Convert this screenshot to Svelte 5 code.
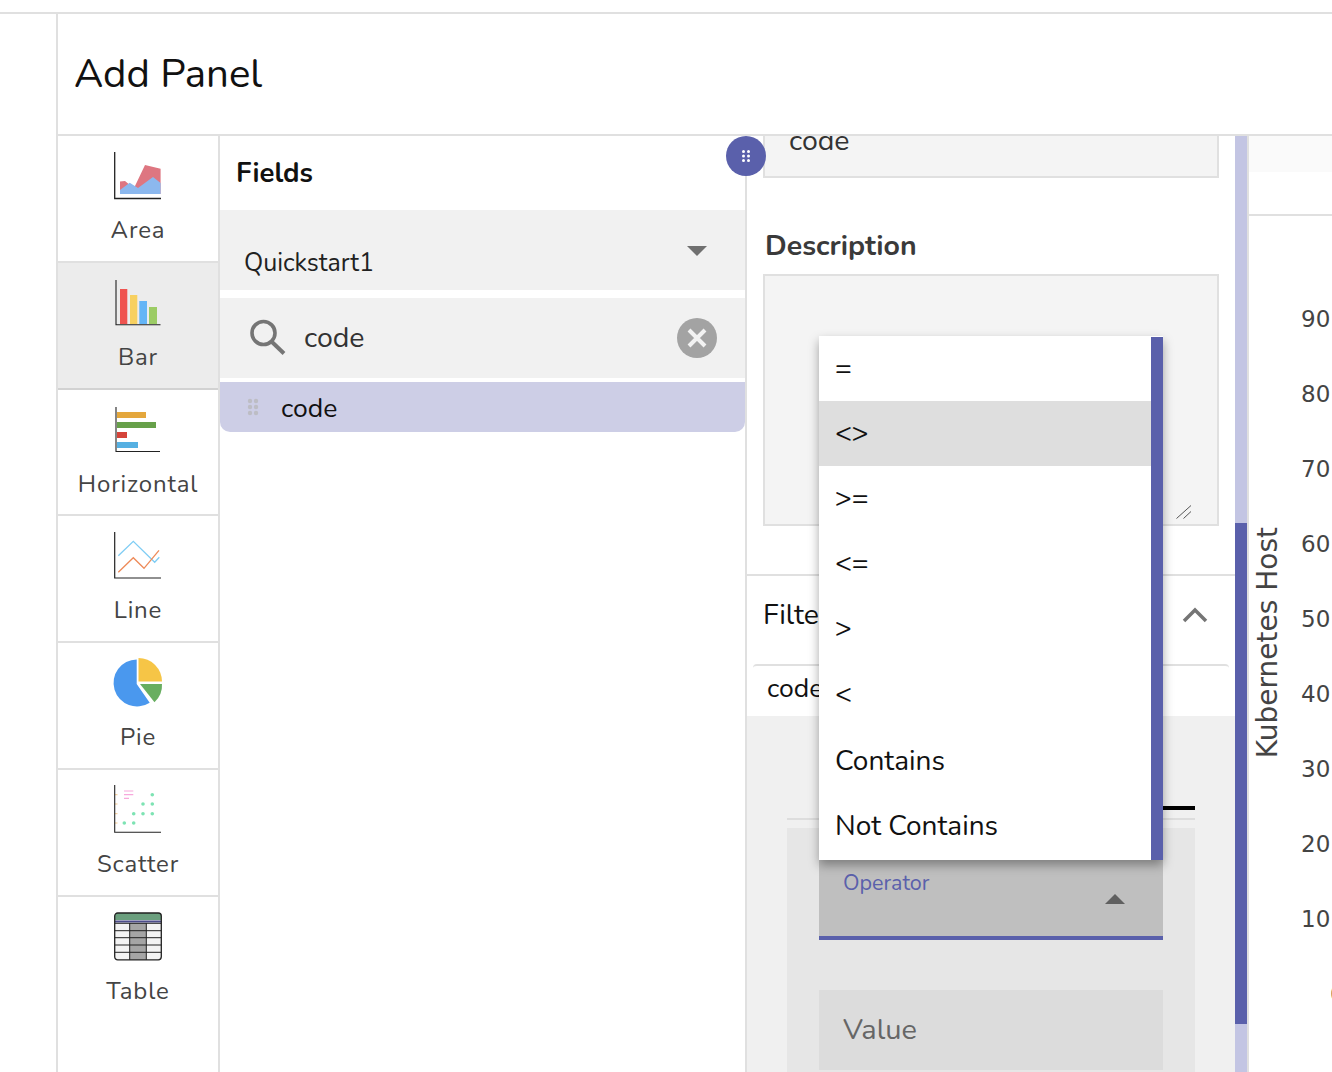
<script>
  const types = ['Area', 'Bar', 'Horizontal', 'Line', 'Pie', 'Scatter', 'Table'];
  const ops = ['=', '<>', '>=', '<=', '>', '<', 'Contains', 'Not Contains'];
  const ticks = [90, 80, 70, 60, 50, 40, 30, 20, 10];
  const scatterDots = [[38.3,8.7],[29,18],[38.3,18],[19.7,27.7],[29,27.7],[38.3,27.7],[10.3,37],[19.7,37]];
</script>

<div class="page">
  <div class="frame">
    <div class="gutter"></div>
    <div class="main">
      <header class="head"><h1>Add Panel</h1></header>
      <div class="body">
        <nav class="types">
          {#each types as t}
            <div class="type" class:active={t === 'Bar'} class:last={t === 'Table'}>
              <svg class="ticon" viewBox="0 0 48 48" width="48" height="48">
                {#if t === 'Area'}
                  <path d="M6 42 V29.500 L11 29 L17 34 L21 34 L31 13 L46.600 16.700 V42Z" fill="#de7681"/>
                  <path d="M6 42 V38 L15.700 30.700 L24 36 L39 25 L46.600 31 V42Z" fill="#8cb8ee"/>
                  <path d="M0.700 0 V46.500 H47" fill="none" stroke="#222" stroke-width="1.300"/>
                {:else if t === 'Bar'}
                  <rect x="6" y="10" width="7.300" height="35" fill="#ef5350"/>
                  <rect x="16" y="16" width="7.300" height="29" fill="#f7d060"/>
                  <rect x="25.300" y="22" width="7.700" height="23" fill="#64b5f6"/>
                  <rect x="35" y="28" width="8" height="17" fill="#9ccc65"/>
                  <path d="M2 1 V45.700 H46.500" fill="none" stroke="#222" stroke-width="1.100"/>
                {:else if t === 'Horizontal'}
                  <rect x="3" y="6" width="29" height="6" fill="#e4a73c"/>
                  <rect x="3" y="16" width="39" height="6" fill="#67a04a"/>
                  <rect x="3" y="26" width="10" height="6" fill="#d5443a"/>
                  <rect x="3" y="36" width="21" height="6" fill="#56b0e2"/>
                  <path d="M2 1 V45.500 H46" fill="none" stroke="#222" stroke-width="1.100"/>
                {:else if t === 'Line'}
                  <path d="M4.300 23.700 L19.300 9.300 L40.700 30.300 L45.300 25.300" fill="none" stroke="#7fcdf4" stroke-width="1.300"/>
                  <path d="M4.300 40.300 L19.300 25.700 L30 36.300 L45 18.300" fill="none" stroke="#ee8a58" stroke-width="1.300"/>
                  <path d="M0.700 0 V46 H47" fill="none" stroke="#222" stroke-width="1.200"/>
                {:else if t === 'Pie'}
                  <path d="M22.700 0.500 A23.500 23.500 0 1 0 35.700 43.800 L22.700 25Z" fill="#4a98ee"/>
                  <path d="M24.500 -1 A23.500 23.500 0 0 1 48 22.500 H24.500Z" fill="#f6c546"/>
                  <path d="M26 25 H48 A23 23 0 0 1 40.500 43.200Z" fill="#68ae60"/>
                {:else if t === 'Scatter'}
                  <path d="M1 8.700 H3.500 M1 18 H3.500 M1 27.700 H3.500 M1 37 H3.500" stroke="#f7c98b" stroke-width="1"/>
                  <path d="M10 5 H19.300 M10 8.700 H19.300 M10 12.300 H15" stroke="#f7a8dc" stroke-width="1.200"/>
                  {#each scatterDots as d}<circle cx={d[0]} cy={d[1]} r="1.800" fill="#7de3b3"/>{/each}
                  <path d="M0.700 -1 V46.300 H47" fill="none" stroke="#222" stroke-width="1.100"/>
                {:else}
                  <rect x="0.700" y="0" width="46.600" height="46.800" rx="3" fill="#f3f3f3"/>
                  <path d="M0.700 7 V3 Q0.700 0 3.700 0 H44.300 Q47.300 0 47.300 3 V7Z" fill="#6b9f7e"/>
                  <rect x="15.700" y="10" width="16.600" height="36.800" fill="#a5a5a5"/>
                  <path d="M0.700 8.500 H47.300" stroke="#4c4c8a" stroke-width="1.800"/>
                  <path d="M0.700 10.300 H47.300 M0.700 17.700 H47.300 M0.700 24.700 H47.300 M0.700 32 H47.300 M0.700 39.300 H47.300" stroke="#222" stroke-width="1"/>
                  <path d="M15.700 10 V46.800 M32.300 10 V46.800" stroke="#222" stroke-width="1"/>
                  <rect x="0.700" y="0" width="46.600" height="46.800" rx="3" fill="none" stroke="#222" stroke-width="1.300"/>
                {/if}
              </svg>
              <span>{t}</span>
            </div>
          {/each}
        </nav>

        <section class="fields">
          <h2>Fields</h2>
          <div class="select">
            <span>Quickstart1</span>
            <i class="caret"></i>
          </div>
          <div class="search">
            <svg width="38" height="38" viewBox="0 0 38 38" fill="none" stroke="#757575" stroke-width="3.600">
              <circle cx="15.500" cy="14" r="11.500"/>
              <path d="M23.500 22.500 L36 34.500" stroke-width="4"/>
            </svg>
            <span class="q">code</span>
            <svg class="clear" width="40" height="40" viewBox="0 0 40 40">
              <circle cx="20" cy="20" r="20" fill="#a3a3a3"/>
              <path d="M12 12 L28 28 M28 12 L12 28" stroke="#f2f2f2" stroke-width="4"/>
            </svg>
          </div>
          <div class="field">
            <svg width="12" height="18" viewBox="0 0 12 18" fill="#bdbdc4">
              <circle cx="3" cy="3" r="2.200"/><circle cx="9" cy="3" r="2.200"/>
              <circle cx="3" cy="9" r="2.200"/><circle cx="9" cy="9" r="2.200"/>
              <circle cx="3" cy="15" r="2.200"/><circle cx="9" cy="15" r="2.200"/>
            </svg>
            <span>code</span>
          </div>
        </section>

        <section class="config">
          <div class="handle">
            <svg width="10" height="14" viewBox="0 0 10 14" fill="#fff">
              <circle cx="2.500" cy="2.500" r="1.500"/><circle cx="7.500" cy="2.500" r="1.500"/>
              <circle cx="2.500" cy="7" r="1.500"/><circle cx="7.500" cy="7" r="1.500"/>
              <circle cx="2.500" cy="11.500" r="1.500"/><circle cx="7.500" cy="11.500" r="1.500"/>
            </svg>
          </div>
          <div class="scroll">
            <div class="name"><span>code</span></div>
            <h3>Description</h3>
            <div class="desc">
              <svg class="grip" width="16" height="14" viewBox="0 0 16 14" stroke="#555" fill="none">
                <path d="M0.500 13.500 L15 0.500 M7.500 13.500 L15 6.500"/>
              </svg>
            </div>
            <div class="filter-head">
              <span>Filters</span>
              <svg width="26" height="16" viewBox="0 0 26 16" fill="none" stroke="#757575" stroke-width="3.500"><path d="M2 14 L13 3 L24 14"/></svg>
            </div>
            <div class="filter-name">code</div>
            <div class="filter-body">
              <div class="tabs"></div>
              <div class="card">
                <div class="operator">
                  <span>Operator</span>
                  <i class="up"></i>
                </div>
                <div class="value">Value</div>
              </div>
            </div>
          </div>
          <div class="bar"><div class="thumb"></div></div>

          <ul class="menu">
            {#each ops as op}
              <li class:hover={op === '<>'} class:sym={op.length < 3}>{op}</li>
            {/each}
          </ul>
        </section>

        <section class="preview">
          <div class="strip"></div>
          <div class="chart">
            <div class="ylabel">Kubernetes Host</div>
            <div class="ticks">
              {#each ticks as t}<span>{t}</span>{/each}
              <span class="zero">0</span>
            </div>
          </div>
        </section>
      </div>
    </div>
  </div>
</div>

<style>
  :global(body) { margin: 0; background: #fff; }
  .page {
    width: 1332px; height: 1072px; overflow: hidden; padding-top: 12px; box-sizing: border-box;
    font-family: "Nunito", "Lato", "Noto Sans", sans-serif; color: #212121;
  }
  .frame { height: 100%; display: flex; border-top: 2px solid #e0e0e0; }
  .gutter { width: 56px; flex: none; border-right: 2px solid #e0e0e0; }
  .main { flex: 1; min-width: 0; display: flex; flex-direction: column; }
  .head { height: 120px; border-bottom: 2px solid #e0e0e0; display: flex; align-items: center; padding-left: 17px; flex: none; }
  h1 { font-size: 40.200px; font-weight: 400; margin: 0 0 2px -1px; color: #111; }
  .body { flex: 1; min-height: 0; display: flex; }

  .types { width: 160px; flex: none; border-right: 2px solid #e0e0e0; }
  .type {
    height: 126.800px; border-bottom: 2px solid #e0e0e0; display: flex; flex-direction: column; align-items: center;
    padding-top: 16px; box-sizing: border-box; font-size: 24px; letter-spacing: .85px; color: #444; line-height: 31px;
  }
  .type.active { background: #ececec; border-color: #d2d2d2; }
  .type.last { border-bottom: 0; }
  .ticon { display: block; margin-bottom: 15px; flex: none; overflow: visible; }

  .fields { width: 525px; flex: none; border-right: 2px solid #e0e0e0; }
  h2 { font-size: 27.500px; font-weight: 700; margin: 0; height: 74px; line-height: 75px; padding-left: 16px; color: #111; }
  .select {
    height: 80px; background: #f1f1f1; display: flex; align-items: flex-end;
    padding: 0 38px 10px 24px; box-sizing: border-box; font-size: 25px; position: relative;
  }
  .caret { position: absolute; right: 38px; top: 36px; border: 10px solid transparent; border-top-color: #707070; border-bottom: 0; }
  .search {
    margin-top: 8px; height: 80px; background: #f1f1f1; display: flex; align-items: center;
    padding: 0 28px; font-size: 28.500px; color: #333;
  }
  .q { flex: 1; margin: 0 0 2px 18px; }
  .field {
    margin-top: 4px; height: 50px; background: #cdcee6; border-radius: 0 0 10px 10px;
    display: flex; align-items: center; padding-left: 27px; font-size: 26.500px; color: #111;
  }
  .field span { margin: 1px 0 0 22px; }

  .config { width: 500px; flex: none; position: relative; display: flex; }
  .handle {
    position: absolute; left: -21px; top: 0; width: 40px; height: 40px; border-radius: 50%; background: #5a60ab;
    display: flex; align-items: center; justify-content: center; z-index: 3;
  }
  .scroll { width: 488px; flex: none; overflow: hidden; }
  .name {
    margin: -20px 16px 0; height: 62px; background: #f4f4f4; border: 2px solid #e0e0e0; border-top: 0; box-sizing: border-box;
    padding: 0 24px; font-size: 28.500px; color: #333; line-height: 50px;
  }
  h3 { font-size: 28.500px; font-weight: 700; color: #3a3a3a; margin: 0; height: 96px; line-height: 135px; padding-left: 18px; box-sizing: border-box; }
  .desc { margin: 0 16px; height: 252px; background: #f4f4f4; border: 2px solid #e0e0e0; box-sizing: border-box; position: relative; }
  .grip { position: absolute; right: 25px; bottom: 5px; }
  .filter-head {
    margin-top: 48px; border-top: 2px solid #e0e0e0; height: 77px; display: flex; align-items: center; justify-content: space-between;
    padding: 0 27px 11px 16px; font-size: 28.500px; color: #111;
  }
  .filter-name { margin: 0 6px; border-top: 2px solid #e0e0e0; border-radius: 4px 4px 0 0; height: 50px; line-height: 45px; padding-left: 14px; font-size: 26.500px; color: #111; }
  .filter-body { background: #f0f0f0; height: 400px; padding: 90px 40px 0; box-sizing: border-box; position: relative; }
  .tabs { height: 4px; background: #000; margin: 0 0 18px 300px; }
  .filter-body::before { content: ""; position: absolute; left: 40px; right: 40px; top: 102px; height: 2px; background: #ddd; }
  .card { background: #e6e6e6; height: 300px; padding: 12px 32px 0; box-sizing: border-box; }
  .operator {
    height: 96px; background: #bfbfbf; border-bottom: 4px solid #5a60ab; position: relative;
    font-size: 21.500px; color: #5a60ab;
  }
  .operator span { position: absolute; left: 24px; top: 28px; }
  .up { position: absolute; right: 38px; top: 54px; border: 10px solid transparent; border-bottom-color: #606060; border-top: 0; }
  .value {
    margin-top: 50px; height: 80px; background: #dcdcdc; padding-left: 24px; font-size: 29px; line-height: 80px; color: #666;
  }
  .bar { width: 12px; background: #c3c5e3; flex: none; position: relative; }
  .thumb { position: absolute; top: 387px; height: 501px; left: 0; right: 0; background: #5a60ab; }

  .menu {
    position: absolute; left: 72px; top: 200px; width: 344px; height: 524px; margin: 0; padding: 0 12px 0 0; list-style: none; background: #fff;
    box-sizing: border-box; box-shadow: 0 5px 10px rgba(0,0,0,.35); z-index: 4;
    font-size: 28px; color: #111;
  }
  .menu::after { content: ""; position: absolute; right: 0; top: 1px; bottom: 0; width: 12px; background: #5a60ab; }
  .menu li { height: 65.200px; padding-left: 16px; display: flex; align-items: center; box-sizing: border-box; }
  .menu li.sym { padding-bottom: 2px; }
  .menu li:nth-child(7), .menu li:nth-child(8) { padding-top: 2px; }
  .menu li.hover { background: #dedede; }

  .preview { flex: 1; min-width: 0; border-left: 2px solid #e0e0e0; }
  .strip { height: 36px; background: #fafafa; }
  .chart { margin-top: 42px; border-top: 2px solid #e0e0e0; height: 800px; position: relative; font-family: "DejaVu Sans", sans-serif; color: #444; overflow: hidden; }
  .ticks { position: absolute; left: 52px; top: 89px; display: flex; flex-direction: column; font-size: 23px; }
  .ticks span { height: 75px; line-height: 28px; }
  .ticks .zero { padding-left: 29px; }
  .ylabel { position: absolute; left: 4px; top: 311px; writing-mode: vertical-rl; transform: rotate(180deg); font-size: 28px; color: #444; white-space: nowrap; line-height: 30px; }
</style>
